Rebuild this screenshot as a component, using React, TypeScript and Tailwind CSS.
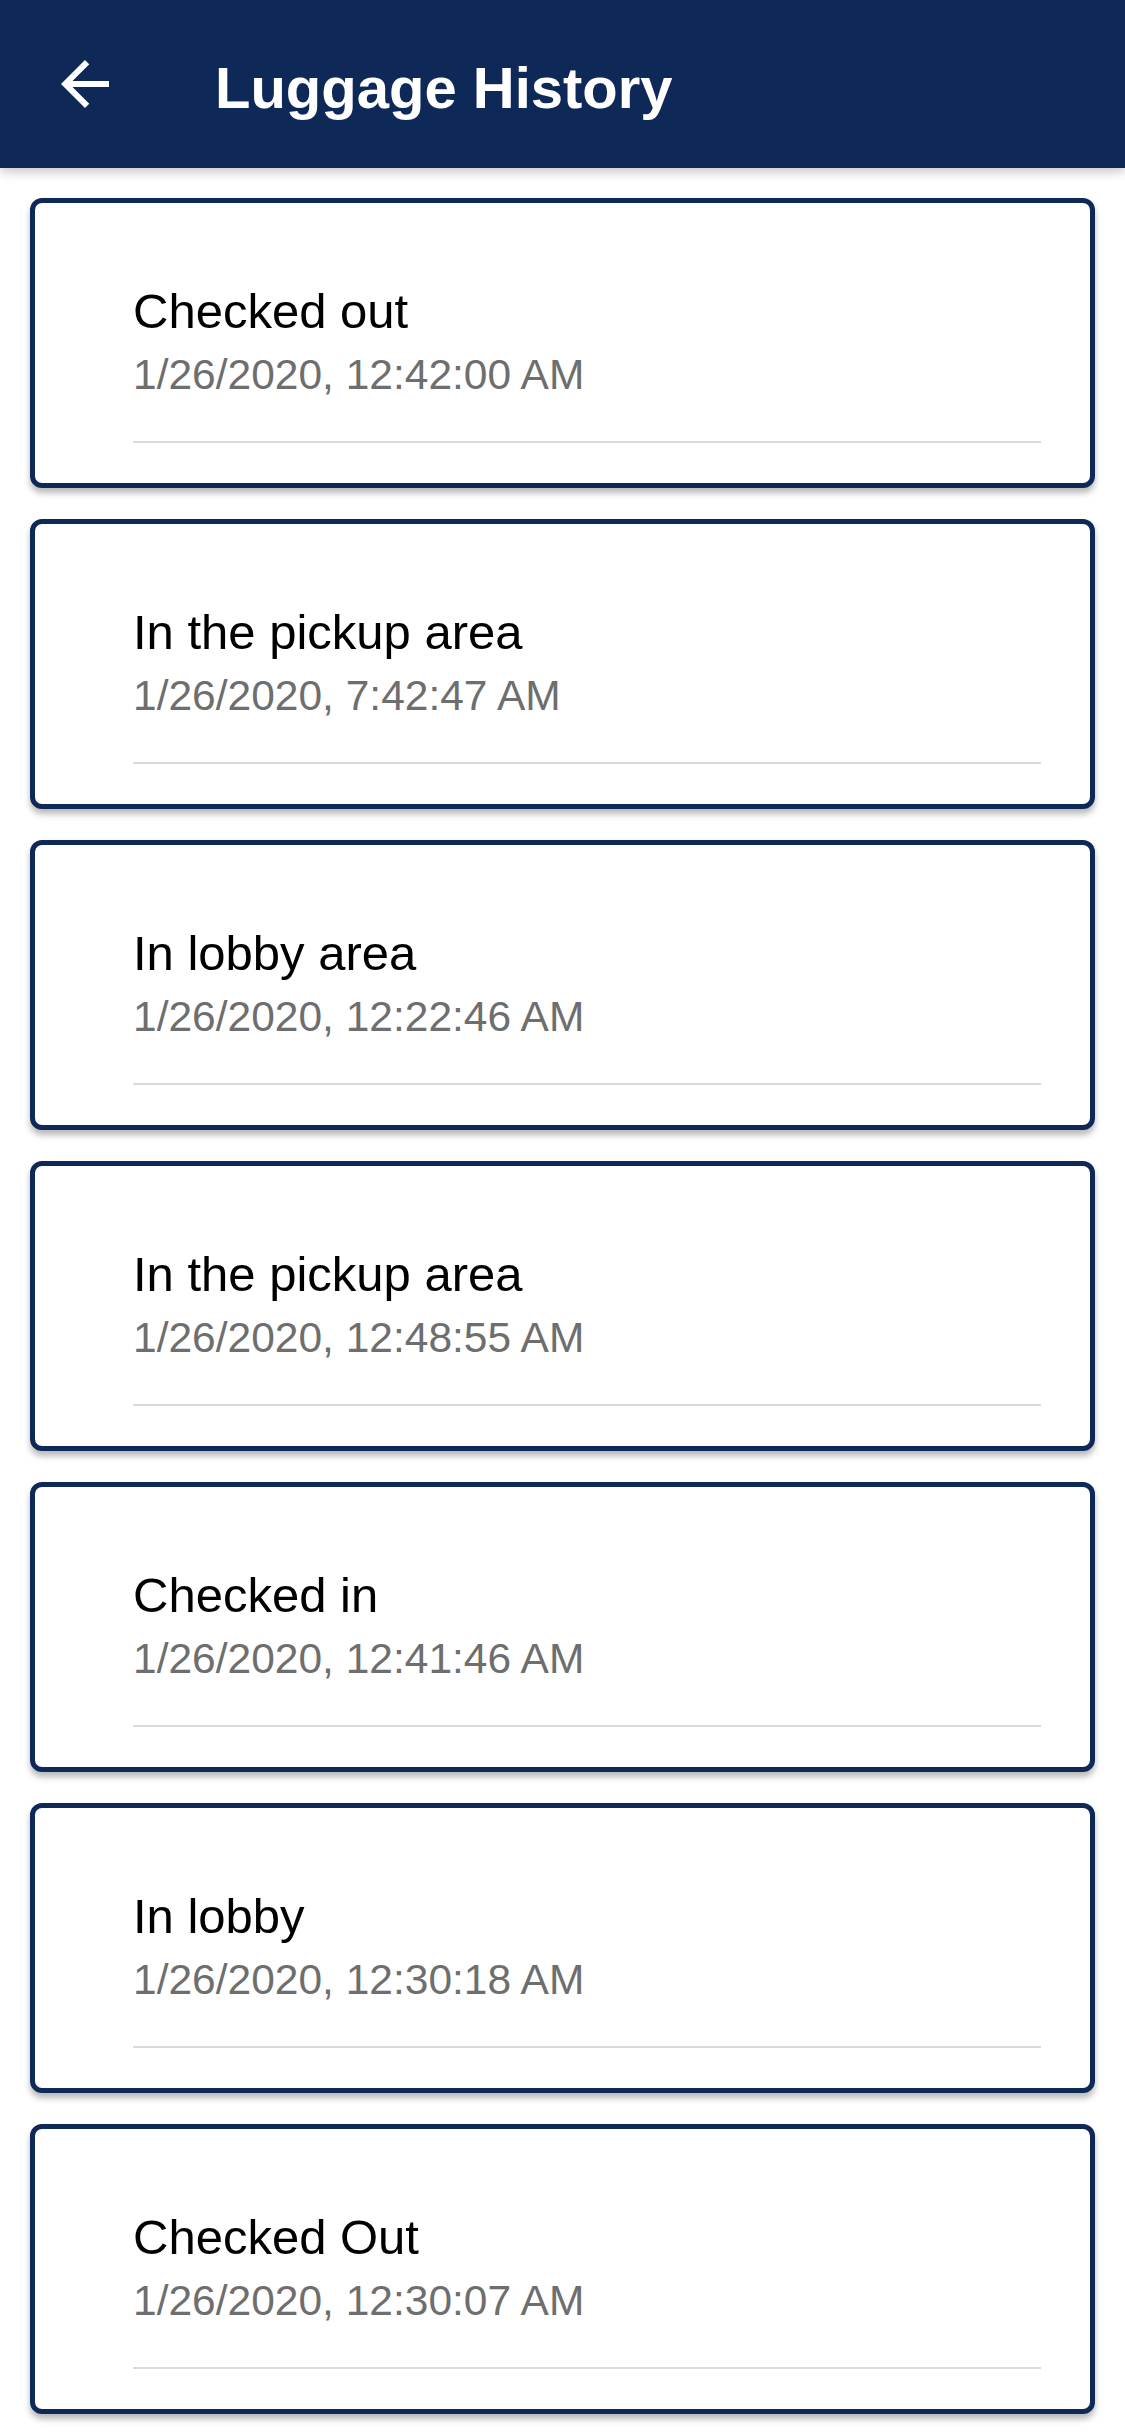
const history = [
  { status: "Checked out", time: "1/26/2020, 12:42:00 AM" },
  { status: "In the pickup area", time: "1/26/2020, 7:42:47 AM" },
  { status: "In lobby area", time: "1/26/2020, 12:22:46 AM" },
  { status: "In the pickup area", time: "1/26/2020, 12:48:55 AM" },
  { status: "Checked in", time: "1/26/2020, 12:41:46 AM" },
  { status: "In lobby", time: "1/26/2020, 12:30:18 AM" },
  { status: "Checked Out", time: "1/26/2020, 12:30:07 AM" },
];

function BackArrow() {
  return (
    <svg width="72" height="72" viewBox="0 0 24 24" fill="white">
      <path d="M20 11H7.83l5.59-5.59L12 4l-8 8 8 8 1.41-1.41L7.83 13H20v-2z" />
    </svg>
  );
}

export default function App() {
  return (
    <div
      className="min-h-[2436px] w-[1125px] bg-white"
      style={{ fontFamily: '"Liberation Sans", Arial, Helvetica, sans-serif' }}
    >
      <header className="relative z-10 flex h-[168px] items-center bg-[#0e2958] pl-[49px] shadow-[0_4px_10px_rgba(0,0,0,0.22)]">
        <BackArrow />
        <h1 className="ml-[94px] mt-[7px] text-[58px] font-semibold leading-[70px] text-white">
          Luggage History
        </h1>
      </header>

      <main className="flex flex-col gap-[31px] px-[30px] pt-[30px]">
        {history.map((h, i) => (
          <div
            key={i}
            className="rounded-[12px] border-[5px] border-[#0e2958] bg-white shadow-[0_5px_6px_rgba(0,0,0,0.28)]"
          >
            <div className="ml-[98px] mr-[49px] pt-[80px] pb-[40px]">
              <div className="text-[49px] leading-[56px] text-black">{h.status}</div>
              <div className="mt-[12px] text-[42.5px] leading-[48px] text-[#6e6e6e]">{h.time}</div>
              <div className="mt-[42px] h-[2px] bg-[#dadada]" />
            </div>
          </div>
        ))}
      </main>
    </div>
  );
}
